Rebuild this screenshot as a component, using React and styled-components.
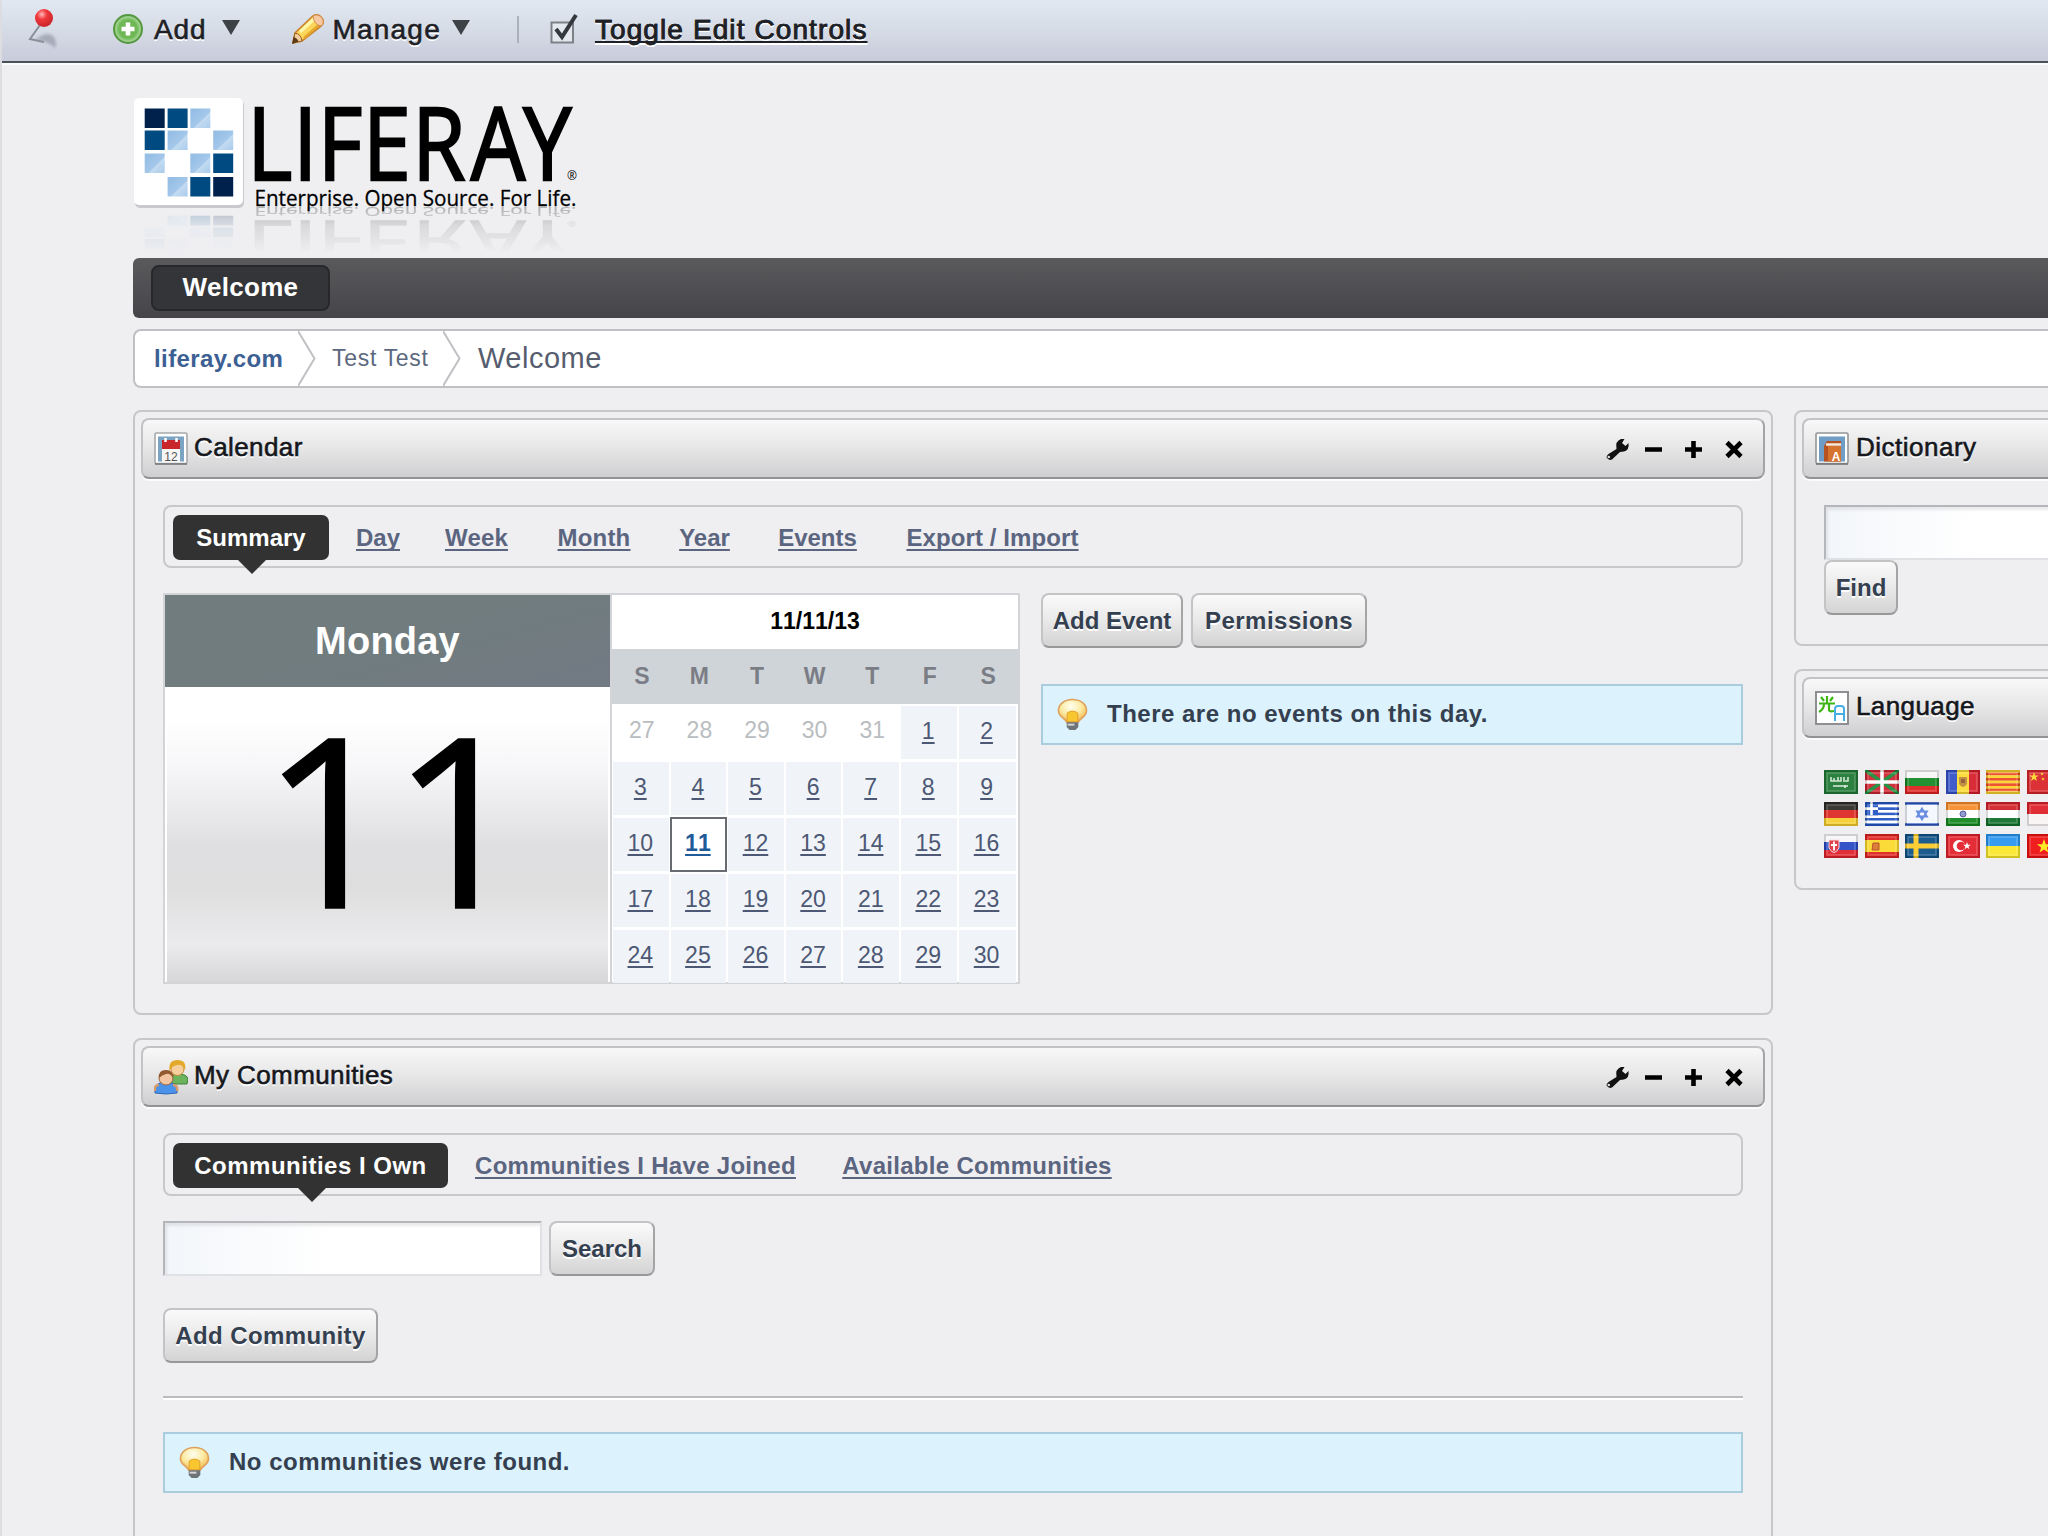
import React from 'react'
import styled, { createGlobalStyle, css } from 'styled-components'

const GlobalStyle = createGlobalStyle`
  * {
    box-sizing: border-box;
  }
  body {
    margin: 0;
    background: #efeff2;
    font-family: "Liberation Sans", Arial, sans-serif;
  }
`

const Page = styled.div`
  width: 100vw;
  height: 100vh;
  overflow: hidden;
  border-left: 2px solid #dcdde1;
  background: #efeff2;
`

/* ---------- dockbar ---------- */
const Dockbar = styled.header`
  display: flex;
  align-items: center;
  height: 63px;
  padding: 0 0 3px 26px;
  border-bottom: 2px solid #4c5157;
  background: linear-gradient(#e1e8f1, #d7dde7 45%, #c8cbdb);
  box-shadow: 0 2px 0 #fafbfb;
`
const DockItem = styled.a`
  display: flex;
  align-items: center;
  margin-left: ${({ $gap }) => $gap}px;
  color: #1d2025;
  font-size: 28px;
  line-height: 34px;
  letter-spacing: ${({ $ls }) => $ls || 0}px;
  -webkit-text-stroke: 0.6px #1d2025;
  text-shadow: 0 2px 0 #fff;
  svg {
    flex: none;
    margin-bottom: 1px;
    overflow: visible;
  }
`
const DockLabel = styled.span`
  margin-left: ${({ $left }) => $left}px;
  padding-top: 2px;
  ${({ $underline }) => $underline && css`
    text-decoration: underline;
    text-decoration-thickness: 2px;
    text-underline-offset: 2px;
    text-decoration-skip-ink: none;
  `}
`
const Arrow = styled.i`
  margin: 0 0 3px ${({ $left }) => $left}px;
  border: 9px solid transparent;
  border-top: 15px solid #3d4247;
  border-bottom: 0;
`
const Separator = styled.i`
  width: 2px;
  height: 27px;
  margin-left: 47px;
  background: #aab0bc;
`

/* ---------- banner and navigation ---------- */
const Wrapper = styled.div`
  margin-left: 131px;
`
const Logo = styled.svg`
  display: block;
  width: 460px;
  height: 195px;
`
const NavBar = styled.nav`
  display: flex;
  align-items: center;
  height: 60px;
  padding-left: 18px;
  border-radius: 6px 0 0 6px;
  background: linear-gradient(#5a5a5d, #454549);
`
const NavTab = styled.a`
  width: 179px;
  height: 46px;
  margin-bottom: 1px;
  border: 2px solid #27282a;
  border-radius: 8px;
  background: #343538;
  color: #fff;
  font-size: 26px;
  font-weight: bold;
  line-height: 40px;
  letter-spacing: 0.3px;
  text-align: center;
`
const Breadcrumbs = styled.div`
  display: flex;
  align-items: center;
  height: 59px;
  margin-top: 11px;
  padding-left: 19px;
  border: 2px solid #bfc0c4;
  border-right: 0;
  border-radius: 8px 0 0 8px;
  background: #fff;
  svg {
    width: 18px;
    height: 55px;
    flex: none;
  }
`
const Crumb = styled.a`
  width: ${({ $w }) => $w}px;
  margin-left: ${({ $left }) => $left || 0}px;
  flex: none;
  color: ${({ $color }) => $color};
  font-size: ${({ $size }) => $size}px;
  font-weight: ${({ $bold }) => ($bold ? 'bold' : 'normal')};
  letter-spacing: ${({ $ls }) => $ls || 0}px;
  line-height: 55px;
  white-space: nowrap;
`

/* ---------- portlets ---------- */
const Columns = styled.main`
  display: flex;
  gap: 21px;
  margin-top: 22px;
`
const Column = styled.div`
  display: flex;
  flex-direction: column;
  gap: 23px;
  width: ${({ $w }) => $w}px;
  flex: none;
`
const PortletBox = styled.section`
  height: ${({ $h }) => $h}px;
  padding: 6px;
  border: 2px solid #c6c7ca;
  border-radius: 8px;
`
const PortletHead = styled.div`
  display: flex;
  align-items: center;
  height: 61px;
  padding: 0 20px 0 11px;
  border: 2px solid #c2c3c5;
  border-right-color: #a3a4a7;
  border-bottom-color: #929396;
  border-radius: 8px;
  background: linear-gradient(#f8f8f9, #e6e6e7 50%, #cfcfd1);
  box-shadow: 0 2px 0 #fbfbfc;
  svg {
    flex: none;
  }
`
const PortletTitle = styled.h2`
  flex: 1;
  margin: 0 0 4px ${({ $left }) => $left || 6}px;
  color: #15171c;
  font-size: 26px;
  font-weight: normal;
  line-height: 52px;
  letter-spacing: ${({ $ls }) => $ls}px;
  -webkit-text-stroke: 0.6px #15171c;
  text-shadow: 0 2px 0 #fff;
`
const PortletBody = styled.div`
  padding: 26px 22px 0;
`
const TabStrip = styled.div`
  display: flex;
  height: 63px;
  padding: 8px 0 0 8px;
  border: 2px solid #c6c8ca;
  border-radius: 8px;
`
const Tab = styled.a`
  position: relative;
  width: ${({ $w }) => $w}px;
  height: 45px;
  margin-left: ${({ $gap }) => $gap || 0}px;
  flex: none;
  color: #5b6580;
  font-size: 24px;
  font-weight: bold;
  line-height: 45px;
  letter-spacing: ${({ $ls }) => $ls || 0}px;
  text-align: center;
  text-decoration: underline;
  text-decoration-thickness: 2px;
  text-underline-offset: 3px;
  text-decoration-skip-ink: none;
  white-space: nowrap;
  ${({ $active }) => $active && css`
    border-radius: 7px;
    background: #323232;
    color: #fff;
    text-decoration: none;
    &::after {
      content: "";
      position: absolute;
      left: 50%;
      bottom: -14px;
      margin-left: -14px;
      border: 15px solid transparent;
      border-top-color: #323232;
      border-bottom: 0;
    }
  `}
`
const Button = styled.button`
  width: ${({ $w }) => $w}px;
  height: 55px;
  padding: 0;
  border: 2px solid #c4c4c6;
  border-right-color: #a5a5a8;
  border-bottom-color: #98989b;
  border-radius: 8px;
  background: linear-gradient(#fafafa, #e9e9ea 50%, #d3d3d4);
  color: #34404f;
  font-family: inherit;
  font-size: 24px;
  font-weight: bold;
  letter-spacing: ${({ $ls }) => $ls || 0}px;
  text-shadow: 0 2px 0 #fff;
  white-space: nowrap;
`
const Field = styled.input`
  display: block;
  width: ${({ $w }) => $w}px;
  height: 55px;
  border: 2px solid #e0e1e4;
  border-top-color: #b5b6b9;
  border-left-color: #b5b6b9;
  background: linear-gradient(90deg, #f3f6fa, #fff 45%);
  box-shadow: inset 2px 3px 3px rgba(90, 95, 110, 0.13);
`
const Row = styled.div`
  display: flex;
  gap: ${({ $gap }) => $gap || 0}px;
  margin-top: ${({ $top }) => $top || 0}px;
`
const Message = styled.div`
  display: flex;
  align-items: center;
  height: 61px;
  margin-top: ${({ $top }) => $top}px;
  padding-left: 14px;
  border: 2px solid #a9cddc;
  background: #dcf2fd;
  color: #34404f;
  font-size: 24px;
  font-weight: bold;
  letter-spacing: 0.5px;
  span {
    margin: 0 0 1px 19px;
  }
`
const Divider = styled.hr`
  height: 4px;
  margin: 33px 0 0;
  border: 0;
  border-top: 2px solid #babbbd;
  border-bottom: 2px solid #fff;
`

/* ---------- calendar ---------- */
const CalendarBox = styled.div`
  display: flex;
  width: 857px;
  height: 391px;
  border: 2px solid #d2d4d7;
  background: #fff;
`
const Today = styled.div`
  width: 447px;
  height: 387px;
  border-right: 2px solid #d2d4d7;
  text-align: center;
`
const TodayName = styled.div`
  height: 92px;
  background: linear-gradient(165deg, #707c7e 50%, #727a84);
  color: #fff;
  font-size: 38px;
  font-weight: bold;
  line-height: 93px;
  letter-spacing: 0.2px;
`
const TodayNumber = styled.div`
  height: 295px;
  padding-left: 8px;
  border: solid #fff;
  border-width: 0 2px;
  background: linear-gradient(#fff 10%, #f6f6f8 28%, #dfdfe1 54%, #dededf 68%, #ebebed 87%, #d7d7d9);
  color: #000;
  font-family: "Open Sans", "Noto Sans", sans-serif;
  font-size: 236px;
  line-height: 260px;
  letter-spacing: -5px;
  -webkit-text-stroke: 1.5px #000;
`
const Month = styled.div`
  width: 406px;
`
const MonthDate = styled.div`
  height: 54px;
  color: #000;
  font-size: 23px;
  font-weight: bold;
  line-height: 53px;
  text-align: center;
  font-kerning: none;
`
const WeekDays = styled.div`
  display: grid;
  grid-template-columns: repeat(6, 57.6px) 1fr;
  height: 55px;
  padding-left: 1px;
  background: #cfd4d8;
  color: #7b7d86;
  font-size: 23px;
  font-weight: bold;
  line-height: 55px;
  text-align: center;
`
const Days = styled.div`
  display: grid;
  grid-template-columns: repeat(6, 55.6px) 57px;
  grid-template-rows: repeat(5, 53px);
  gap: 3px 2px;
  padding: 2px 0 0 1px;
`
const Day = styled.a`
  padding-right: 1px;
  color: #4c5874;
  background: #f0f4f8;
  font-size: 23px;
  line-height: 51px;
  text-align: center;
  text-decoration: underline;
  text-decoration-thickness: 2px;
  text-underline-offset: 3px;
  font-kerning: none;
  ${({ $out }) => $out && css`
    padding-left: 3px;
    background: #fff;
    color: #b9bdbf;
    line-height: 48px;
    text-decoration: none;
  `}
  ${({ $today }) => $today && css`
    outline: 2px solid #686b72;
    outline-offset: -1px;
    background: #fff;
    color: #1f5a99;
    font-weight: bold;
  `}
`
const Events = styled.div`
  flex: 1;
`

const Flags = styled.div`
  display: grid;
  grid-template-columns: repeat(8, 34px);
  gap: 8px 6.6px;
  padding-top: 6px;
`
const FlagSvg = styled.svg`
  display: block;
  width: 34px;
  height: 24px;
`

/* ---------- icons ---------- */
const PinIcon = () => (
  <svg width="30" height="42" viewBox="0 0 30 42">
    <defs>
      <radialGradient id="pin" cx="0.38" cy="0.3" r="0.7">
        <stop offset="0" stopColor="#ffb9b9" />
        <stop offset="0.4" stopColor="#f0383c" />
        <stop offset="1" stopColor="#c9252b" />
      </radialGradient>
      <filter id="soft"><feGaussianBlur stdDeviation="1.6" /></filter>
    </defs>
    <path d="M8 31q14-10 19 0q2 6 0 9q-5-6-18-8z" fill="#8e94a2" opacity="0.65" filter="url(#soft)" />
    <path d="M12 17L2 31l14 3" stroke="#8a8e98" strokeWidth="2" fill="none" />
    <circle cx="16" cy="10" r="9" fill="url(#pin)" />
  </svg>
)
const AddIcon = () => (
  <svg width="30" height="30" viewBox="0 0 30 30">
    <circle cx="15" cy="15" r="14" fill="#9ccf8a" stroke="#55983f" strokeWidth="2" />
    <circle cx="15" cy="15" r="10.5" fill="#6db855" stroke="#83c66f" strokeWidth="1.5" />
    <path d="M15 8.5v13M8.5 15h13" stroke="#fff" strokeWidth="4.6" />
  </svg>
)
const PencilIcon = () => (
  <svg width="32" height="30" viewBox="0 0 32 30">
    <path d="M1 29l2-10L21 2q5-3 9 2q3 5-1 8L10 27z" fill="#fbd65a" stroke="#c8832b" strokeWidth="1.6" />
    <path d="M8 18L23 4" stroke="#fff6a8" strokeWidth="3.5" />
    <path d="M12 24L28 10" stroke="#e6a72c" strokeWidth="2.5" />
    <path d="M21 2q5-3 9 2q3 5-1 8q-7-1-8-10z" fill="#f6c9a4" stroke="#d48f4f" strokeWidth="1" />
    <path d="M1 29l2-10q6 1 7 8z" fill="#f3cf9f" stroke="#9a6122" strokeWidth="1" />
    <path d="M0 30l1.5-7q4 1 5 4.5z" fill="#5f3a17" />
  </svg>
)
const CheckIcon = () => (
  <svg width="28" height="30" viewBox="0 0 28 30">
    <path d="M1.5 8.5h21.5v20H1.5z" fill="#e4e7ee" stroke="#7c8187" strokeWidth="2" />
    <path d="M6 15l6 8L26 1" fill="none" stroke="#33383d" strokeWidth="4" />
  </svg>
)
const CalendarIcon = () => (
  <svg width="34" height="33" viewBox="0 0 34 33">
    <rect x="1" y="1" width="32" height="30.5" rx="1.5" fill="#fff" stroke="#a6a8ab" strokeWidth="1.6" />
    <path d="M1 32h32" stroke="#77797c" strokeWidth="1.6" />
    <rect x="4" y="4.5" width="26" height="25" fill="#7ba4c2" />
    <rect x="8" y="11" width="18" height="19" fill="#f6f6f6" />
    <rect x="8" y="8" width="18" height="9" fill="#c9262b" />
    <path d="M11.5 6v4M22.5 6v4" stroke="#fff" strokeWidth="2.5" />
    <text x="17" y="29" fontSize="12" textAnchor="middle" fill="#555">12</text>
  </svg>
)
const BookIcon = () => (
  <svg width="34" height="33" viewBox="0 0 34 33">
    <rect x="1" y="1" width="32" height="30.5" rx="1.5" fill="#fff" stroke="#929497" strokeWidth="1.6" />
    <path d="M1 32h32" stroke="#77797c" strokeWidth="1.6" />
    <rect x="4" y="4.5" width="26" height="25" fill="#6f9dc6" />
    <path d="M9 29.5V14l3-5h14v20.5z" fill="#b5521f" />
    <path d="M13 14h13v15.5H13z" fill="#d5732f" />
    <path d="M11 12.5h15" stroke="#f9e9dc" strokeWidth="2.5" />
    <text x="21" y="29" fontSize="12" fontWeight="bold" textAnchor="middle" fill="#fff">A</text>
  </svg>
)
const LanguageIcon = () => (
  <svg width="34" height="34" viewBox="0 0 34 34">
    <rect x="1" y="1" width="32" height="32" fill="#fff" stroke="#8d8f92" strokeWidth="2" />
    <path d="M12 5v8M6 6l3 4M18 6l-3 4M4 12.5h16M9 13q0 5-5 8M14 13v6q0 2 5 1" fill="none" stroke="#3fb618" strokeWidth="2.2" />
    <path d="M20 30V18q0-3 3-3h3q3 0 3 3v12M20 23h9" fill="none" stroke="#45aee6" strokeWidth="2" />
  </svg>
)
const PeopleIcon = () => (
  <svg width="34" height="36" viewBox="0 0 34 36">
    <path d="M16 25q-1-10 8-10t10 5l-1 5z" fill="#6bb35c" stroke="#417f38" />
    <circle cx="23.5" cy="10" r="6.5" fill="#f6cf9c" stroke="#c78a36" />
    <path d="M15.5 12Q14 1 23.5 1T31 11q-3-6-8-5t-7.5 6z" fill="#e3a92a" />
    <path d="M1 34q-2-11 11-11t11 11q-11 2-22 0z" fill="#4b93ea" stroke="#2f68b8" />
    <path d="M1 32q-1-6 4-6M23 32q1-6-4-6" fill="none" stroke="#d79a6a" strokeWidth="2.5" />
    <circle cx="12" cy="19" r="7" fill="#f2c4a0" stroke="#a0663c" />
    <path d="M5 19q-1-8 7-8t7 8q-3-5-7-4t-7 4z" fill="#93592f" />
  </svg>
)
const BulbIcon = () => (
  <svg width="31" height="33" viewBox="0 0 32 33">
    <defs>
      <radialGradient id="bulb" cx="0.45" cy="0.3" r="0.7">
        <stop offset="0" stopColor="#fffef0" />
        <stop offset="0.55" stopColor="#fbeaa0" />
        <stop offset="1" stopColor="#f2b44a" />
      </radialGradient>
    </defs>
    <path d="M16 1C7 1 1.5 6.5 1.5 12.5c0 6 6 7 8.5 12h12c2.5-5 8.5-6 8.5-12C30.5 6.5 25 1 16 1z" fill="url(#bulb)" stroke="#dfa05a" strokeWidth="1.6" />
    <path d="M10.5 24V15q5.5-4 11 0v9z" fill="#f8c62e" stroke="#e0a02c" />
    <path d="M10 24.5h12v5l-3 3h-6l-3-3z" fill="#707478" />
    <path d="M11 27h7" stroke="#d6d8da" strokeWidth="2" />
  </svg>
)
const Tools = () => (
  <svg width="138" height="24" viewBox="0 0 138 24">
    <path d="M11.500 12Q10 4 16 2l3.500 0l-2.500 4l3.500 3l3-3q1 7-4.500 8.500l-4 .5L7 22.500q-3 1.500-5.500-2q0-2 2-3.500z" fill="#111" />
    <circle cx="3.8" cy="20" r="1.3" fill="#ddd" />
    <path d="M40 12.500h17M80 12.500h17M88.500 4v17" stroke="#000" strokeWidth="4.600" />
    <path d="M122 5.500l14 14M136 5.500l-14 14" stroke="#000" strokeWidth="4.600" />
  </svg>
)
const Chevron = () => (
  <svg viewBox="0 0 18 55">
    <path d="M0 0L16.5 27.5L0 55" fill="none" stroke="#c0c1c5" strokeWidth="2" />
  </svg>
)

/* ---------- logo ---------- */
const TILES = ['nbl.', 'bl.l', 'l.lb', '.lbn']
const TILE_FILL = { n: '#00214c', b: '#004a82', l: 'url(#tile)' }
const COLS = [11.7, 34.6, 57.3, 80.2]
const ROWS = [45.5, 67.5, 90.5, 114]

const Tiles = () => TILES.map((row, r) => [...row].map((t, c) => t !== '.' && (
  <rect key={`${r}${c}`} x={COLS[c]} y={ROWS[r]} width="20" height="19.5" fill={TILE_FILL[t]} />
)))

const LiferayLogo = () => (
  <Logo viewBox="0 0 460 195">
    <defs>
      <linearGradient id="tile" x1="0" y1="0" x2="1" y2="1">
        <stop offset="0.2" stopColor="#97bfe6" />
        <stop offset="0.58" stopColor="#a5c8ea" />
        <stop offset="0.6" stopColor="#c3dbf1" />
        <stop offset="1" stopColor="#a9cbec" />
      </linearGradient>
      <linearGradient id="fade" x1="0" y1="0" x2="0" y2="1">
        <stop offset="0" stopColor="#fff" stopOpacity="0.26" />
        <stop offset="0.4" stopColor="#fff" stopOpacity="0.09" />
        <stop offset="1" stopColor="#fff" stopOpacity="0" />
      </linearGradient>
      <mask id="mirror" maskUnits="userSpaceOnUse" x="0" y="144" width="460" height="50">
        <rect x="0" y="144" width="460" height="46" fill="url(#fade)" />
      </mask>
    </defs>
    <rect x="2" y="37" width="109" height="108" rx="5" fill="#c9cacd" />
    <rect x="1" y="35" width="109" height="107" rx="5" fill="#fff" />
    <g id="tiles"><Tiles /></g>
    <g id="wordmark" fill="#000" fontFamily='"Open Sans", "Noto Sans", sans-serif'>
      <text transform="translate(0 116.5) scale(0.85 1)" x="134.500 188.500 217.500 270.500 328.500 397.500 459" fontSize="101.500" stroke="#000" strokeWidth="2.400">LIFERAY</text>
      <text x="434" y="117" fontSize="12">®</text>
      <text x="121.5" y="142.5" fontSize="22.5" stroke="#000" strokeWidth="0.3" textLength="322" lengthAdjust="spacingAndGlyphs">Enterprise. Open Source. For Life.</text>
    </g>
    <g mask="url(#mirror)">
      <use href="#tiles" transform="translate(0 219.5) scale(1 -0.5)" />
      <use href="#wordmark" transform="translate(0 222) scale(1 -0.55)" />
    </g>
  </Logo>
)

/* ---------- flags ---------- */
const Bars = ({ c }) => c.map((fill, i) => (
  <rect key={i} y={(24 / c.length) * i} width="34" height={24 / c.length + 0.1} fill={fill} />
))
const Star = ({ x, y, r, fill }) => (
  <path transform={`translate(${x} ${y}) scale(${r})`} d="M0-1L.24-.31L.95-.31L.38.12L.59.81L0 .4L-.59.81L-.38.12L-.95-.31L-.24-.31z" fill={fill} />
)

const FLAGS = [
  <><Bars c={['#1f7a35']} /><path d="M7 7v4h3V8v3h4V7v4h3V7m2 4h5V7m-4 0v3" stroke="#cfe6d2" strokeWidth="1.6" fill="none" /><path d="M9 16h15m-3-1v3" stroke="#dcecde" strokeWidth="1.6" /></>,
  <><Bars c={['#cf2630']} /><path d="M0 0l34 24M34 0L0 24" stroke="#1d8d3c" strokeWidth="3.5" /><path d="M17 0v24M0 12h34" stroke="#fff" strokeWidth="3.5" /></>,
  <Bars c={['#f6f6f6', '#168a25', '#e02320']} />,
  <><rect width="11" height="24" fill="#3552c8" /><rect x="11" width="12" height="24" fill="#fbdc31" /><rect x="23" width="11" height="24" fill="#d6202c" /><path d="M13 7h8v7q-4 6-8 0z" fill="#c08a3a" /><path d="M15 9h4v4h-4z" fill="#8d5d33" /></>,
  <Bars c={['#fbd22c', '#ea4a23', '#fbd22c', '#ea4a23', '#fbd22c', '#ea4a23', '#fbd22c', '#ea4a23', '#fbd22c']} />,
  <><Bars c={['#d8262a']} /><Star x={7} y={7} r={5} fill="#fbd42c" /><Star x={15} y={4} r={2} fill="#fbd42c" /><Star x={16} y={9} r={2} fill="#fbd42c" /></>,
  <Bars c={['#2456b5', '#fff', '#d8262a']} />,
  <Bars c={['#d8262a', '#fff', '#2456b5']} />,
  <Bars c={['#2d2c27', '#df2a25', '#f6cf2d']} />,
  <><Bars c={['#2456c4', '#fff', '#2456c4', '#fff', '#2456c4', '#fff', '#2456c4', '#fff', '#2456c4']} /><rect width="13" height="13.3" fill="#2456c4" /><path d="M6.5 0v13.3M0 6.6h13" stroke="#fff" strokeWidth="2.6" /></>,
  <><Bars c={['#f4f7fc']} /><path d="M0 1.5h34M0 22.5h34" stroke="#2c56c0" strokeWidth="2.6" /><path d="M17 6.5l5 8H12zM17 17.5l5-8H12z" fill="none" stroke="#5f86e0" strokeWidth="1.8" /></>,
  <><Bars c={['#f68d2c', '#fff', '#15881f']} /><circle cx="17" cy="12" r="3" fill="#8f98c8" stroke="#4753a0" /></>,
  <Bars c={['#d2232b', '#fff', '#12702c']} />,
  <Bars c={['#dd2229', '#f8f4f4']} />,
  <Bars c={['#d8262a', '#fff', '#2456b5']} />,
  <Bars c={['#fff', '#d8262a']} />,
  <><Bars c={['#f6f6fa', '#2849c4', '#e0232b']} /><path d="M5 6h10v8q-5 9-10 0z" fill="#e0343f" stroke="#f6d9e0" /><path d="M10 7.5v9M7 11h6" stroke="#fff" strokeWidth="1.8" /></>,
  <><Bars c={['#e0231f', '#fbd92b', '#fbd92b', '#e0231f']} /><path d="M8 9h6v7H7z" fill="#d9772f" stroke="#b8491f" /></>,
  <><Bars c={['#0f5288']} /><path d="M11 0v24M0 12h34" stroke="#fccb2a" strokeWidth="5" /></>,
  <><Bars c={['#e3202a']} /><circle cx="13" cy="12" r="6" fill="#fff" /><circle cx="15" cy="12" r="4.3" fill="#e3202a" /><Star x={21} y={12} r={4} fill="#fff" /></>,
  <Bars c={['#2b96ef', '#fbe62a']} />,
  <><Bars c={['#ee1111']} /><Star x={17} y={12.5} r={7.5} fill="#fdec1c" /></>,
  <Bars c={['#d8262a', '#fff', '#12702c']} />,
  <Bars c={['#2456b5', '#fff', '#2456b5']} />,
]

const Flag = ({ children }) => (
  <FlagSvg viewBox="0 0 34 24">
    {children}
    <rect x="1" y="1" width="32" height="22" fill="none" stroke="#000" strokeOpacity="0.16" strokeWidth="2" />
    <rect x="3" y="3" width="28" height="18" fill="#fff" fillOpacity="0.06" stroke="#fff" strokeOpacity="0.22" strokeWidth="1.5" />
  </FlagSvg>
)

/* ---------- portlet shell ---------- */
const Portlet = ({ title, icon, height, ls, left, tools, children }) => (
  <PortletBox $h={height}>
    <PortletHead>
      {icon}
      <PortletTitle $ls={ls} $left={left}>{title}</PortletTitle>
      {tools && <Tools />}
    </PortletHead>
    <PortletBody>{children}</PortletBody>
  </PortletBox>
)

const DAYS = [27, 28, 29, 30, 31, ...Array.from({ length: 30 }, (_, i) => i + 1)]

const App = () => (
  <Page>
    <GlobalStyle />
    <Dockbar>
      <DockItem $gap={0}><PinIcon /></DockItem>
      <DockItem $gap={55} $ls={0.9}><AddIcon /><DockLabel $left={11}>Add</DockLabel><Arrow $left={15} /></DockItem>
      <DockItem $gap={52} $ls={1.2}><PencilIcon /><DockLabel $left={9}>Manage</DockLabel><Arrow $left={11} /></DockItem>
      <Separator />
      <DockItem $gap={31} $ls={1.1}><CheckIcon /><DockLabel $left={17} $underline>Toggle Edit Controls</DockLabel></DockItem>
    </Dockbar>
    <Wrapper>
      <LiferayLogo />
      <NavBar><NavTab>Welcome</NavTab></NavBar>
      <Breadcrumbs>
        <Crumb $w={144} $size={24} $bold $color="#3c6094" $ls={0.4}>liferay.com</Crumb>
        <Chevron />
        <Crumb $left={16} $w={111} $size={23} $color="#5c687e" $ls={0.7}>Test Test</Crumb>
        <Chevron />
        <Crumb $left={17} $w={160} $size={29} $color="#565d6e" $ls={0.5}>Welcome</Crumb>
      </Breadcrumbs>
      <Columns>
        <Column $w={1640}>
          <Portlet title="Calendar" icon={<CalendarIcon />} height={605} ls={0.4} tools>
            <TabStrip>
              <Tab $active $w={156}>Summary</Tab>
              <Tab $gap={27} $w={40}>Day</Tab>
              <Tab $gap={47} $w={67} $ls={0.2}>Week</Tab>
              <Tab $gap={47} $w={74} $ls={0.2}>Month</Tab>
              <Tab $gap={47} $w={53}>Year</Tab>
              <Tab $gap={47} $w={79}>Events</Tab>
              <Tab $gap={49} $w={173} $ls={0.1}>Export / Import</Tab>
            </TabStrip>
            <Row $top={25} $gap={21}>
              <CalendarBox>
                <Today>
                  <TodayName>Monday</TodayName>
                  <TodayNumber>11</TodayNumber>
                </Today>
                <Month>
                  <MonthDate>11/11/13</MonthDate>
                  <WeekDays>{[...'SMTWTFS'].map((d, i) => <span key={i}>{d}</span>)}</WeekDays>
                  <Days>
                    {DAYS.map((d, i) => <Day key={i} $out={i < 5} $today={d === 11}>{d}</Day>)}
                  </Days>
                </Month>
              </CalendarBox>
              <Events>
                <Row $gap={8}>
                  <Button $w={142}>Add Event</Button>
                  <Button $w={176} $ls={0.5}>Permissions</Button>
                </Row>
                <Message $top={36}><BulbIcon /><span>There are no events on this day.</span></Message>
              </Events>
            </Row>
          </Portlet>
          <Portlet title="My Communities" icon={<PeopleIcon />} height={700} ls={0.4} tools>
            <TabStrip>
              <Tab $active $w={275} $ls={0.5}>Communities I Own</Tab>
              <Tab $gap={27} $w={320} $ls={0.3}>Communities I Have Joined</Tab>
              <Tab $gap={47} $w={270} $ls={0.3}>Available Communities</Tab>
            </TabStrip>
            <Row $top={25} $gap={7}>
              <Field $w={379} />
              <Button $w={106} $ls={0}>Search</Button>
            </Row>
            <Row $top={32}><Button $w={215} $ls={0.4}>Add Community</Button></Row>
            <Divider />
            <Message $top={32}><BulbIcon /><span>No communities were found.</span></Message>
          </Portlet>
        </Column>
        <Column $w={400}>
          <Portlet title="Dictionary" icon={<BookIcon />} height={236} ls={0.5} left={7}>
            <Field $w={330} />
            <Button $w={74}>Find</Button>
          </Portlet>
          <Portlet title="Language" icon={<LanguageIcon />} height={221} ls={0.4} left={7}>
            <Flags>{FLAGS.map((f, i) => <Flag key={i}>{f}</Flag>)}</Flags>
          </Portlet>
        </Column>
      </Columns>
    </Wrapper>
  </Page>
)

export default App
